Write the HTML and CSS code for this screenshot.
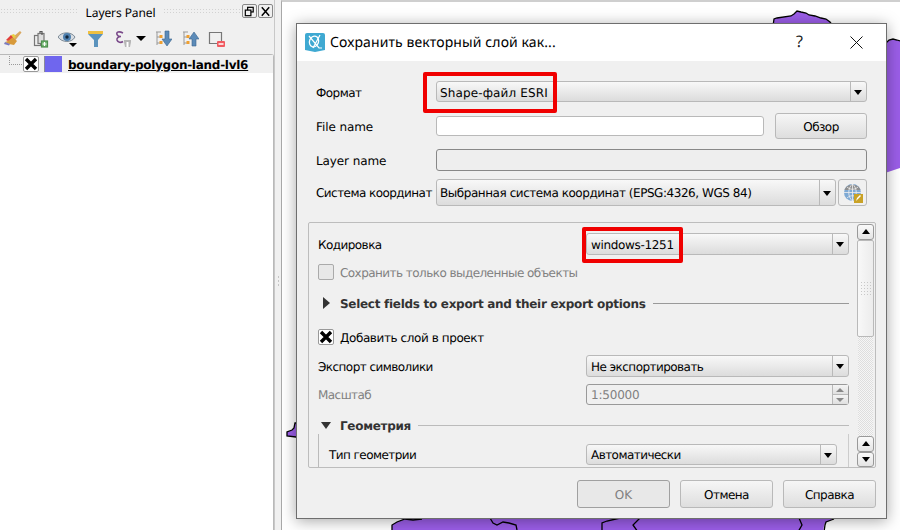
FILE: index.html
```html
<!DOCTYPE html>
<html lang="en">
<head>
    <meta charset="UTF-8">
    <title>Сохранить векторный слой как...</title>
    <link rel="stylesheet" href="styles.css">
</head>
<body>
    <div class="app">
        <aside class="layers-panel">
            <div class="panel-title">
                <span class="grip"></span>
                <span class="panel-name">Layers Panel</span>
                <span class="grip"></span>
                <button class="dock-btn">
                    <svg viewBox="0 0 14 13" width="14" height="13" fill="none" stroke="#000" stroke-width="1.3">
                        <rect x="5" y="2" width="6" height="5"></rect>
                        <rect x="2.5" y="5" width="6" height="6" fill="#f0f0f0"></rect>
                    </svg>
                </button>
                <button class="dock-btn">
                    <svg viewBox="0 0 14 13" width="14" height="13" fill="none" stroke="#000" stroke-width="1.6">
                        <path d="M3 2l8 9M11 2l-8 9"></path>
                    </svg>
                </button>
            </div>

            <div class="toolbar">
                <svg class="tool" viewBox="0 0 18 18" width="18" height="18">
                    <path d="M9 7l7-6 1.500 1.500-6 7.500z" fill="#d9a860"></path>
                    <path d="M7 5l6 6-3 4-5-1-4-2 3-1z" fill="#d89a3a"></path>
                    <path d="M2 10l5-5 2 2-5 4z" fill="#e23f3a"></path>
                    <path d="M7 5l3-1 2 3-2 1z" fill="#e8d040"></path>
                    <path d="M1 12l5 2-1 1.500-5-1.500z" fill="#7a7ac0"></path>
                </svg>
                <svg class="tool" viewBox="0 0 18 18" width="18" height="18" fill="none" stroke="#777" stroke-width="1.2">
                    <rect x="3.5" y="5.5" width="6" height="10" fill="#eee"></rect>
                    <rect x="7" y="3.5" width="6" height="10" fill="#ddd"></rect>
                    <path d="M9 3V1.5h2V5" stroke="#555"></path>
                    <rect x="10.5" y="11" width="6" height="6" fill="#6fb56f" stroke="#4d8f4d"></rect>
                    <path d="M13.5 12v4M11.5 14h4" stroke="#fff"></path>
                </svg>
                <svg class="tool tool-wide" viewBox="0 0 20 18" width="20" height="18">
                    <path d="M0 7c3-5 13-6 17 0-3 6-13 6-17 0z" fill="#d8dde2" stroke="#7c8a96"></path>
                    <circle cx="9" cy="7" r="4" fill="#4d7fae"></circle>
                    <circle cx="9" cy="7" r="1.700" fill="#12263a"></circle>
                    <path d="M11 13h8l-4 4z" fill="#000"></path>
                </svg>
                <svg class="tool" viewBox="0 0 18 18" width="18" height="18">
                    <path d="M1 1h15v3l-5 6v7H7v-7L1 4z" fill="#5b93bd"></path>
                    <path d="M1 1h15v3H1z" fill="#f0c040"></path>
                </svg>
                <svg class="tool" viewBox="0 0 18 18" width="18" height="18" fill="none">
                    <path d="M9 3C5 1 2 2 3 4.500c.6 1.500 3 2 4 2-2 0-4.500 1-4 3.500.6 2.500 4 3 6 1.500" stroke="#7a4a8a" stroke-width="1.600"></path>
                    <path d="M10 10h7v2l-1 5h-5l-1-5z" fill="#b5b5b5"></path>
                    <path d="M12.500 12h2v5h-2z" fill="#fff"></path>
                </svg>
                <span class="tool-arrow"></span>
                <svg class="tool" viewBox="0 0 18 18" width="18" height="18">
                    <path d="M2 2h5M3 2v13M3 7h3M3 13h3" stroke="#999" fill="none"></path>
                    <rect x="5.500" y="5" width="3" height="3" fill="#f0a030"></rect>
                    <rect x="5.500" y="11" width="3" height="3" fill="#f0a030"></rect>
                    <path d="M11 1h4v8h3l-5 7-5-7h3z" fill="#5c8bb8" stroke="#3c668e" stroke-width=".6"></path>
                </svg>
                <svg class="tool" viewBox="0 0 18 18" width="18" height="18">
                    <path d="M2 2h5M3 2v13M3 7h3M3 13h3" stroke="#999" fill="none"></path>
                    <rect x="5.500" y="5" width="3" height="3" fill="#f0a030"></rect>
                    <rect x="5.500" y="11" width="3" height="3" fill="#f0a030"></rect>
                    <path d="M11 16h4V9h3l-5-7-5 7h3z" fill="#5c8bb8" stroke="#3c668e" stroke-width=".6"></path>
                </svg>
                <svg class="tool" viewBox="0 0 18 18" width="18" height="18">
                    <path d="M1.500 2.500h12v11h-12z" fill="none" stroke="#777" stroke-width="1.200"></path>
                    <rect x="9" y="11" width="8" height="6" rx="1" fill="#f05a60"></rect>
                    <path d="M10.500 14h5" stroke="#fff" stroke-width="1.500"></path>
                </svg>
            </div>

            <div class="layer-tree">
                <div class="layer-row">
                    <span class="tree-branch"></span>
                    <span class="check check-white">
                        <svg viewBox="0 0 16 16" width="16" height="16"><path d="M3 3l10 10M13 3L3 13" stroke="#000" stroke-width="3.400"></path></svg>
                    </span>
                    <span class="swatch"></span>
                    <span class="layer-name">boundary-polygon-land-lvl6</span>
                </div>
            </div>
        </aside>

        <div class="splitter"><span class="splitter-dots"></span></div>

        <main class="canvas">
            <svg class="map" viewBox="281 0 619 530" width="619" height="530">
                <g fill="#9b5ee8" stroke="#000" stroke-width="1.300">
                    <path d="M773 26l1-7 3-1 14-2 3-2 3-3 4 1 5 1 3 2 6 1 6 2 5 1 4 3 3 4z"></path>
                    <path d="M298 423h-3l-1 5-2 2-5 2v4l9 1h2z"></path>
                </g>
                <path d="M885 44l4-4 4-1 4 1 3 1v127l-15 5z" fill="#9b5ee8"></path>
                <path d="M885 44l4-4 4-1 4 1 3 1" fill="none" stroke="#000" stroke-width="1.300"></path>
                <path d="M392 532v-7l5-3 8-3h428l-8 4-1 3-1 6z" fill="#9b5ee8"></path>
                <g fill="none" stroke="#000" stroke-width="1.300">
                    <path d="M392 532v-7l5-3 8-3 8 1 9-1"></path>
                    <path d="M490 518l3 5 4 2 6-3 6 1 7 2 1 5"></path>
                    <path d="M602 532v-9l5-2 13-3"></path>
                    <path d="M640 518l-7 7 5 7"></path>
                    <path d="M799 518l3 7-4 7"></path>
                    <path d="M834 519l-8 3-1 3-1 7"></path>
                </g>
            </svg>

            <section class="dialog">
                <header class="dialog-title">
                    <svg class="dialog-logo" viewBox="0 0 20 19" width="20" height="19">
                        <path d="M0 2a2 2 0 0 1 2-2h16a2 2 0 0 1 2 2v15l-10 2-10-2z" fill="#3fa9d2"></path>
                        <ellipse cx="9" cy="8.500" rx="4.500" ry="5.500" transform="rotate(20 9 8.500)" fill="none" stroke="#fff" stroke-width="1.300"></ellipse>
                        <path d="M4 3l10 12h3M15 2L8 15" fill="none" stroke="#fff" stroke-width="1.200"></path>
                    </svg>
                    <span class="dialog-name">Сохранить векторный слой как...</span>
                    <span class="dialog-help">?</span>
                    <svg class="dialog-close" viewBox="0 0 13 13" width="13" height="13">
                        <path d="M.5.5l12 12M12.500.5l-12 12" stroke="#111" fill="none"></path>
                    </svg>
                </header>

                <div class="dialog-body">
                    <div class="form">
                        <div class="form-row row-format">
                            <label class="form-label">Формат</label>
                            <div class="combo combo-fill"><span class="combo-text shape-name">Shape-файл ESRI</span><span class="combo-arrow"></span></div>
                        </div>
                        <div class="form-row row-file">
                            <label class="form-label text-latin">File name</label>
                            <div class="text-input"></div>
                            <button class="btn btn-browse">Обзор</button>
                        </div>
                        <div class="form-row row-layer">
                            <label class="form-label text-latin">Layer name</label>
                            <div class="text-input text-input-off"></div>
                        </div>
                        <div class="form-row row-crs">
                            <label class="form-label">Система координат</label>
                            <div class="combo combo-fill"><span class="combo-text crs-name">Выбранная система координат (EPSG:4326, WGS 84)</span><span class="combo-arrow"></span></div>
                            <button class="btn btn-crs">
                                <svg viewBox="0 0 20 20" width="20" height="20">
                                    <circle cx="9.500" cy="9.500" r="8.500" fill="#7ea9d4"></circle>
                                    <path d="M1.500 7c2-7 14-7 16 0z" fill="#8f8f8f"></path>
                                    <path d="M1 9.500h17M9.500 1v17M4 4c3 3 8 3 11 0M4 15c3-3 8-3 11 0M9.500 1c-5 4-5 13 0 17M9.500 1c5 4 5 13 0 17" fill="none" stroke="#f0f0f0" stroke-width=".8"></path>
                                    <rect x="11" y="11" width="9" height="9" fill="#c9a227"></rect>
                                    <path d="M13 18l1-3 3-3 1 1-3 3z" fill="#fff"></path>
                                </svg>
                            </button>
                        </div>
                    </div>

                    <div class="scroll-area">
                        <div class="scroll-content">
                            <div class="opt-row row-encoding">
                                <span class="opt-label">Кодировка</span>
                                <div class="combo combo-opt"><span class="combo-text code-name">windows-1251</span><span class="combo-arrow"></span></div>
                            </div>
                            <div class="check-row row-selected">
                                <span class="check"></span>
                                <span class="check-label muted">Сохранить только выделенные объекты</span>
                            </div>
                            <div class="section-head row-fields">
                                <span class="tri-right"></span>
                                <span class="section-name">Select fields to export and their export options</span>
                                <span class="section-line"></span>
                            </div>
                            <div class="check-row row-add">
                                <span class="check check-white">
                                    <svg viewBox="0 0 16 16" width="16" height="16"><path d="M3 3l10 10M13 3L3 13" stroke="#000" stroke-width="3.400"></path></svg>
                                </span>
                                <span class="check-label check-add">Добавить слой в проект</span>
                            </div>
                            <div class="opt-row row-symbols">
                                <span class="opt-label">Экспорт символики</span>
                                <div class="combo combo-opt"><span class="combo-text">Не экспортировать</span><span class="combo-arrow"></span></div>
                            </div>
                            <div class="opt-row row-scale">
                                <span class="opt-label muted">Масштаб</span>
                                <div class="spin">
                                    <span class="spin-text">1:50000</span>
                                    <span class="spin-btns"><i class="spin-up"></i><i class="spin-down"></i></span>
                                </div>
                            </div>
                            <div class="group">
                                <div class="group-head">
                                    <span class="tri-down"></span>
                                    <span class="section-name">Геометрия</span>
                                    <span class="section-line group-line"></span>
                                </div>
                                <div class="group-body">
                                    <div class="opt-row row-geom">
                                        <span class="opt-label geom-label">Тип геометрии</span>
                                        <div class="combo combo-opt"><span class="combo-text">Автоматически</span><span class="combo-arrow"></span></div>
                                    </div>
                                </div>
                            </div>
                        </div>

                        <div class="scrollbar">
                            <span class="sb-btn"><i class="sb-up"></i></span>
                            <span class="sb-thumb"><i class="sb-grip"></i></span>
                            <span class="sb-track"></span>
                            <span class="sb-btn"><i class="sb-up"></i></span>
                            <span class="sb-btn"><i class="sb-down"></i></span>
                        </div>
                    </div>

                    <footer class="dialog-buttons">
                        <button class="btn btn-action btn-off">OK</button>
                        <button class="btn btn-action">Отмена</button>
                        <button class="btn btn-action">Справка</button>
                    </footer>
                </div>

                <div class="mark mark-format"></div>
                <div class="mark mark-encoding"></div>
            </section>
        </main>
    </div>
</body>
</html>
```

FILE: styles.css
```css
:root {
    --panel-bg: #f0f0f0;
    --border: #b9b9b9;
    --text: #000;
    --muted: #808080;
    --heading: #333;
    --mark: #f00000;
    --font-ui: 'DejaVu Sans', sans-serif;
    --font-title: 'Noto Sans', sans-serif;
}

* {
    margin: 0;
    padding: 0;
    box-sizing: border-box;
}

body {
    width: 900px;
    height: 530px;
    overflow: hidden;
    background-color: var(--panel-bg);
    color: var(--text);
    font-family: var(--font-ui);
    font-size: 12px;
    letter-spacing: -0.55px;
    text-rendering: geometricPrecision;
}

.app {
    display: flex;
    height: 530px;
}

/* left dock */
.layers-panel {
    width: 274px;
    display: flex;
    flex-direction: column;
    flex-shrink: 0;
}

.panel-title {
    height: 25px;
    display: flex;
    align-items: center;
    padding-right: 1px;
}

.grip {
    flex: 1;
    height: 5px;
    margin-top: -4px;
    background-image: radial-gradient(#d2d2d2 1px, transparent 1px);
    background-size: 3px 3px;
}

.panel-name {
    font-family: var(--font-title);
    font-size: 12px;
    letter-spacing: -0.1px;
    padding: 0 8px 1px;
}

.dock-btn {
    width: 15px;
    height: 14px;
    margin-left: 1px;
    margin-top: -3px;
    border: 1px solid #888;
    border-radius: 2px;
    background: #f0f0f0;
    display: flex;
    align-items: center;
    justify-content: center;
}

.toolbar {
    height: 29px;
    display: flex;
    align-items: center;
    padding: 0 0 2px 4px;
    gap: 9px;
}

.tool {
    flex-shrink: 0;
}

.tool-arrow {
    width: 0;
    height: 0;
    margin-left: -5px;
    margin-right: -1px;
    border-left: 5px solid transparent;
    border-right: 5px solid transparent;
    border-top: 5px solid #000;
}

.layer-tree {
    flex: 1;
    background-color: #fff;
    border: 1px solid var(--border);
    border-bottom: none;
    border-left: none;
    border-radius: 0 3px 0 0;
}

.layer-row {
    height: 18px;
    display: flex;
    align-items: center;
    background-color: var(--panel-bg);
}

.tree-branch {
    width: 13px;
    height: 9px;
    margin-left: 9px;
    margin-top: -8px;
    border-left: 1px dotted #999;
    border-bottom: 1px dotted #999;
}

.layer-row .check {
    margin-left: 1px;
}

.swatch {
    width: 18px;
    height: 16px;
    margin-left: 5px;
    background-color: #6f66ee;
    border-left: 1px solid #8a8a9a;
}

.layer-name {
    margin-left: 6px;
    padding-top: 1px;
    font-weight: bold;
    letter-spacing: -0.27px;
    text-decoration: underline;
}

.splitter {
    width: 7px;
    flex-shrink: 0;
    border-left: 1px solid #c8c8c8;
}

.splitter-dots {
    display: block;
    width: 3px;
    height: 12px;
    margin: 275px 0 0 2px;
    background-image: radial-gradient(#c4c4c4 1px, transparent 1px);
    background-size: 3px 4px;
}

/* map canvas */
.canvas {
    flex: 1;
    position: relative;
    overflow: hidden;
    background-color: #fff;
    border-top: 2px solid #cfcfcf;
    border-left: 1px solid #a8a8a8;
}

.map {
    position: absolute;
    left: -1px;
    top: -2px;
}

/* save dialog */
.dialog {
    position: absolute;
    left: 14px;
    top: 21px;
    width: 591px;
    height: 496px;
    background-color: var(--panel-bg);
    border: 1px solid #6e6e6e;
    box-shadow: 0 2px 14px rgba(0, 0, 0, 0.35);
    display: flex;
    flex-direction: column;
}

.dialog-title {
    height: 37px;
    flex-shrink: 0;
    background-color: #fff;
    display: flex;
    align-items: center;
    padding-left: 8px;
}

.dialog-name {
    font-family: var(--font-title);
    font-size: 14px;
    letter-spacing: 0.1px;
    margin-left: 5px;
    flex: 1;
}

.dialog-help {
    font-family: var(--font-title);
    font-size: 16px;
    letter-spacing: 0;
    color: #222;
    margin: -3px 47px 0 0;
}

.dialog-close {
    margin-right: 23px;
}

.dialog-body {
    flex: 1;
    display: flex;
    flex-direction: column;
    padding: 0 10px 0 11px;
}

.form {
    padding: 20px 9px 0 8px;
}

.form-row {
    display: flex;
    align-items: center;
}

.row-format { height: 21px; }
.row-file { height: 26px; margin-top: 11px; }
.row-layer { height: 22px; margin-top: 10px; }
.row-crs { height: 27px; margin-top: 8px; }

.form-label {
    width: 120px;
    flex-shrink: 0;
    padding-top: 1px;
    white-space: nowrap;
}

.row-format .form-label,
.row-format .combo-text {
    padding-top: 2px;
}

.text-latin {
    letter-spacing: -0.1px;
}

.combo {
    display: flex;
    align-items: center;
    height: 100%;
    background: linear-gradient(#f8f8f8, #dcdcdc);
    border: 1px solid var(--border);
    border-radius: 3px;
}

.combo-fill {
    flex: 1;
}

.combo-fill .combo-text {
    padding-left: 3px;
}

.combo-text {
    flex: 1;
    padding: 1px 0 0 4px;
    white-space: nowrap;
}

.shape-name { letter-spacing: 0.13px; }
.crs-name { letter-spacing: -0.45px; }
.code-name { letter-spacing: -0.33px; }

.combo-arrow {
    width: 16px;
    align-self: stretch;
    flex-shrink: 0;
    border-left: 1px solid var(--border);
    position: relative;
}

.combo-arrow::after {
    content: '';
    position: absolute;
    left: 3px;
    top: 50%;
    margin-top: -2px;
    border-left: 4px solid transparent;
    border-right: 4px solid transparent;
    border-top: 5px solid #000;
}

.text-input {
    flex: 1;
    height: 20px;
    background-color: #fff;
    border: 1px solid var(--border);
    border-radius: 3px;
}

.text-input-off {
    height: 22px;
    background-color: #eee;
    border-color: #888;
}

.btn {
    font-family: var(--font-ui);
    font-size: 12px;
    letter-spacing: -0.55px;
    text-rendering: geometricPrecision;
    padding-top: 1px;
    color: var(--text);
    background: linear-gradient(#f6f6f6, #dedede);
    border: 1px solid var(--border);
    border-radius: 3px;
}

.btn-browse {
    width: 92px;
    height: 26px;
    margin-left: 11px;
}

.btn-crs {
    width: 29px;
    height: 27px;
    margin-left: 2px;
    padding-top: 0;
    display: flex;
    align-items: center;
    justify-content: center;
    background: #f0f0f0;
}

/* scroll area with the export options */
.scroll-area {
    height: 246px;
    margin-top: 16px;
    display: flex;
    flex-shrink: 0;
    border: 1px solid #bdbdbd;
    border-radius: 2px;
}

.scroll-content {
    flex: 1;
    overflow: hidden;
    padding: 10px 8px 0 9px;
}

.opt-row {
    display: flex;
    align-items: center;
    height: 22px;
}

.opt-label {
    width: 268px;
    flex-shrink: 0;
    padding-top: 1px;
    white-space: nowrap;
}

.combo-opt {
    flex: 1;
}

.muted {
    color: var(--muted);
}

.check-row {
    display: flex;
    align-items: center;
    height: 16px;
}

.check {
    width: 16px;
    height: 16px;
    flex-shrink: 0;
    display: block;
    border: 1px solid #aaa;
    border-radius: 2px;
    background-color: #e8e8e8;
    overflow: hidden;
}

.check svg {
    display: block;
    margin: -1px;
}

.check-white {
    background-color: #fff;
    border-color: #999;
}

.check-label {
    margin-left: 6px;
    padding-top: 1px;
}

.check-add {
    letter-spacing: -0.41px;
}

.row-selected { margin-top: 9px; }
.row-add { margin-top: 17px; }
.row-symbols { margin-top: 10px; }
.row-scale { margin-top: 7px; height: 21px; }

.section-head {
    display: flex;
    align-items: center;
    height: 18px;
    margin-top: 14px;
}

.section-name {
    font-weight: bold;
    letter-spacing: -0.29px;
    padding-top: 1px;
    color: var(--heading);
    white-space: nowrap;
}

.section-line {
    flex: 1;
    height: 1px;
    margin-left: 7px;
    background-color: #999;
}

.tri-right {
    width: 0;
    height: 0;
    margin: 0 10px 0 5px;
    border-top: 6px solid transparent;
    border-bottom: 6px solid transparent;
    border-left: 7px solid var(--heading);
}

.tri-down {
    width: 0;
    height: 0;
    margin: 0 9px 0 2px;
    border-left: 5px solid transparent;
    border-right: 5px solid transparent;
    border-top: 7px solid var(--heading);
}

.spin {
    flex: 1;
    height: 100%;
    display: flex;
    align-items: center;
    border: 1px solid #999;
    border-radius: 3px;
}

.spin-text {
    flex: 1;
    padding: 1px 0 0 4px;
    color: var(--muted);
    letter-spacing: -0.2px;
}

.spin-btns {
    width: 16px;
    align-self: stretch;
    display: flex;
    flex-direction: column;
    border-left: 1px solid var(--border);
}

.spin-btns i {
    flex: 1;
    position: relative;
    background: linear-gradient(#f4f4f4, #e0e0e0);
}

.spin-up {
    border-bottom: 1px solid var(--border);
}

.spin-up::after,
.spin-down::after {
    content: '';
    position: absolute;
    left: 3px;
    top: 3px;
    border-left: 4px solid transparent;
    border-right: 4px solid transparent;
}

.spin-up::after { border-bottom: 4px solid #888; }
.spin-down::after { border-top: 4px solid #888; }

.group {
    margin-top: 11px;
}

.group-head {
    display: flex;
    align-items: center;
    height: 18px;
    margin-left: 1px;
}

.group-line {
    background-color: #bbb;
}

.group-body {
    height: 42px;
    padding: 10px 11px 0 10px;
    border-right: 1px solid #ccc;
    border-left: 1px solid #bbb;
}

.geom-label {
    width: 257px;
}

.row-geom {
    height: 21px;
}

/* scrollbar */
.scrollbar {
    width: 17px;
    flex-shrink: 0;
    margin-right: 1px;
    padding-top: 1px;
    display: flex;
    flex-direction: column;
}

.sb-btn {
    height: 15.5px;
    flex-shrink: 0;
    display: flex;
    align-items: center;
    justify-content: center;
    background: linear-gradient(#fafafa, #e4e4e4);
    border: 1px solid #999;
    border-radius: 3px;
}

.sb-up,
.sb-down {
    width: 0;
    height: 0;
    border-left: 4px solid transparent;
    border-right: 4px solid transparent;
}

.sb-up { border-bottom: 5px solid #000; }
.sb-down { border-top: 5px solid #000; }

.sb-thumb {
    height: 97px;
    flex-shrink: 0;
    display: flex;
    align-items: center;
    justify-content: center;
    background: linear-gradient(90deg, #f8f8f8, #ececec);
    border: 1px solid var(--border);
    border-radius: 2px;
}

.sb-grip {
    width: 11px;
    height: 14px;
    background-image: radial-gradient(#c8c8c8 1px, transparent 1px);
    background-size: 3px 3px;
}

.sb-track {
    flex: 1;
    margin: 0 1px;
    background: repeating-conic-gradient(#dedede 0 25%, #f6f6f6 0 50%) 0 0 / 2px 2px;
}

.dialog-buttons {
    display: flex;
    justify-content: flex-end;
    gap: 10px;
    margin-top: 12px;
}

.btn-action {
    width: 93px;
    height: 28px;
}

.btn-off {
    color: var(--muted);
    border-color: #a0a0a0;
    background: #e8e8e8;
    letter-spacing: 0;
}

/* red highlights drawn over the screenshot */
.mark {
    position: absolute;
    border: 4px solid var(--mark);
    border-radius: 2px;
}

.mark-format {
    left: 126px;
    top: 48px;
    width: 134px;
    height: 41px;
}

.mark-encoding {
    left: 285px;
    top: 203px;
    width: 101px;
    height: 36px;
}
```
